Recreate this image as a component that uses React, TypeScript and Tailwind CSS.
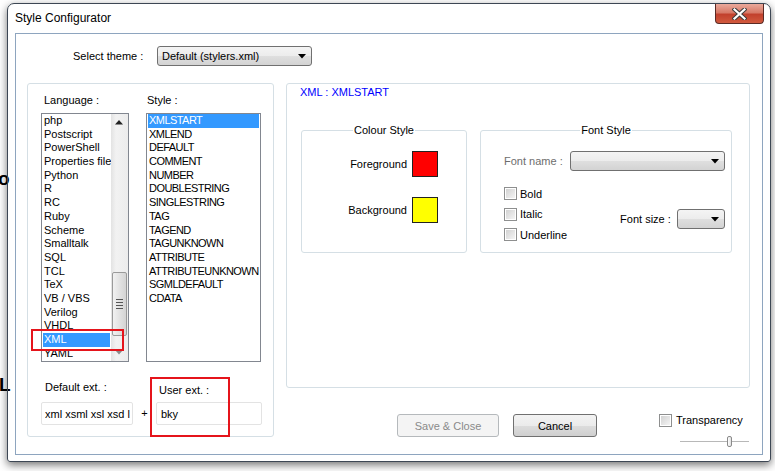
import React from 'react';

const languages = [
  'php', 'Postscript', 'PowerShell', 'Properties file', 'Python', 'R', 'RC', 'Ruby', 'Scheme',
  'Smalltalk', 'SQL', 'TCL', 'TeX', 'VB / VBS', 'Verilog', 'VHDL', 'XML', 'YAML'
];

const styles = [
  'XMLSTART', 'XMLEND', 'DEFAULT', 'COMMENT', 'NUMBER', 'DOUBLESTRING', 'SINGLESTRING', 'TAG',
  'TAGEND', 'TAGUNKNOWN', 'ATTRIBUTE', 'ATTRIBUTEUNKNOWN', 'SGMLDEFAULT', 'CDATA'
];

const Arrow = ({ color = '#000' }: { color?: string }) => (
  <svg width="8" height="5" viewBox="0 0 8 5">
    <path d="M0 0 H8 L4 4.5 Z" fill={color} />
  </svg>
);

const Combo = ({ className = '', text }: { className?: string; text?: string }) => (
  <div
    className={`flex items-center justify-between rounded-[3px] border border-[#707070] bg-[linear-gradient(#f4f4f4,#ececec_50%,#dfdfdf_50%,#d3d3d3)] pl-[4px] pr-[5px] ${className}`}
  >
    <span className="truncate text-[11px] leading-[14px] text-black">{text}</span>
    <Arrow />
  </div>
);

const CheckBox = () => (
  <div className="h-[13px] w-[13px] shrink-0 border border-[#8e8f8f] bg-white p-[1px]">
    <div className="h-full w-full bg-[linear-gradient(135deg,#d2d2d2,#f4f4f4)]" />
  </div>
);

const GroupTitle = ({ children }: { children: React.ReactNode }) => (
  <div className="absolute -top-[8px] left-0 right-0 flex justify-center">
    <span className="bg-white px-[1px] text-[11px] leading-[14px] text-black">{children}</span>
  </div>
);

export default function App() {
  return (
    <div className="relative h-[471px] w-[775px] overflow-hidden bg-white font-['Liberation_Sans',Arial,sans-serif]">
      {/* bits of the window behind */}
      <div className="absolute left-[-2px] top-[168px] text-[19px] font-bold leading-[22px] text-black">o</div>
      <div className="absolute left-[-1px] top-[374px] text-[19px] font-bold leading-[22px] text-black">L</div>

      {/* dialog window */}
      <div className="absolute left-[7px] top-[3px] flex h-[459px] w-[764px] flex-col rounded-t-[7px] rounded-b-[3px] border border-[#3d4754] bg-[linear-gradient(170deg,#cfe2f6,#b9d3ee_40%,#c3daf2_60%,#b3cdea)]/90 shadow-[0_3px_9px_rgba(0,0,0,0.55)]">
        {/* title bar */}
        <div className="relative flex h-[29px] shrink-0 items-center pl-[7px]">
          <span className="text-[12px] leading-[15px] text-black">Style Configurator</span>
          <div className="absolute right-[6px] top-0 flex h-[20px] w-[49px] items-center justify-center rounded-b-[4px] border border-t-0 border-[#5a2a25] bg-[linear-gradient(#eaa99b,#d77a68_45%,#c2412d_55%,#d15a3e)]">
            <svg width="15" height="12" viewBox="0 0 15 12">
              <path d="M2.5 1.5 L12.5 10.5 M12.5 1.5 L2.5 10.5" stroke="#3b3b3b" strokeWidth="4.2" strokeLinecap="square" />
              <path d="M2.5 1.5 L12.5 10.5 M12.5 1.5 L2.5 10.5" stroke="#ffffff" strokeWidth="2.2" strokeLinecap="square" />
            </svg>
          </div>
        </div>

        {/* client area */}
        <div className="mb-[6px] ml-[7px] mr-[7px] flex-1 border border-[#8ea5bf] bg-white text-[11px] leading-[14px] text-black">
          {/* theme row */}
          <div className="flex items-center pt-[12px]">
            <span className="ml-[57px] w-[84px]">Select theme :</span>
            <Combo className="h-[20px] w-[155px]" text="Default (stylers.xml)" />
          </div>

          <div className="mt-[17px] flex pl-[11px]">
            {/* left group */}
            <div className="relative h-[354px] w-[247px] rounded-[3px] border border-[#d5dfe5]">
              <div className="flex pl-[13px] pt-[9px]">
                <div className="w-[88px]">
                  <div className="pl-[3px]">Language :</div>
                  <div className="mt-[6px] flex h-[249px] overflow-hidden border border-[#828790]">
                    <div className="flex-1 overflow-hidden">
                      {languages.map((l) => (
                        <div
                          key={l}
                          className={`mx-[1px] h-[13.7px] whitespace-nowrap pl-[1px] leading-[13.7px] ${l === 'XML' ? 'bg-[#3399ff] text-white' : ''}`}
                        >
                          {l}
                        </div>
                      ))}
                    </div>
                    <div className="relative w-[17px] shrink-0 bg-[linear-gradient(90deg,#e3e3e3,#f2f2f2_30%,#ececec)]">
                      <div className="absolute left-[4px] top-[6px]">
                        <svg width="8" height="5" viewBox="0 0 8 5"><path d="M0 4.5 H8 L4 0 Z" fill="#222" /></svg>
                      </div>
                      <div className="absolute left-[1px] right-[1px] top-[158px] flex h-[64px] flex-col items-center justify-center gap-[2px] rounded-[2px] border border-[#9a9a9a] bg-[linear-gradient(90deg,#f1f1f1,#e2e2e2_50%,#d4d4d4)]">
                        <div className="h-[1px] w-[7px] bg-[#555]" />
                        <div className="h-[1px] w-[7px] bg-[#555]" />
                        <div className="h-[1px] w-[7px] bg-[#555]" />
                        <div className="h-[1px] w-[7px] bg-[#555]" />
                      </div>
                      <div className="absolute left-[4px] top-[236px]">
                        <Arrow color="#8a8a8a" />
                      </div>
                    </div>
                  </div>
                </div>
                <div className="ml-[17px] w-[115px]">
                  <div className="pl-[1px]">Style :</div>
                  <div className="mt-[6px] h-[249px] overflow-hidden border border-[#828790] tracking-[-0.55px]">
                    {styles.map((s) => (
                      <div
                        key={s}
                        className={`mx-[1px] h-[13.7px] whitespace-nowrap pl-[1px] leading-[13.7px] ${s === 'XMLSTART' ? 'bg-[#3399ff] text-white' : ''}`}
                      >
                        {s}
                      </div>
                    ))}
                  </div>
                </div>
              </div>

              {/* extensions */}
              <div className="flex pl-[13px]">
                <div className="w-[92px]">
                  <div className="mt-[18px] pl-[4px]">Default ext. :</div>
                  <div className="mt-[8px] h-[23px] overflow-hidden rounded-[2px] border border-[#e3e3e3] pl-[3px] pr-[2px]">
                    <div className="overflow-hidden whitespace-nowrap pt-[4px]">xml xsml xsl xsd l</div>
                  </div>
                </div>
                <div className="w-[23px] pt-[44px] text-center">+</div>
                <div className="w-[106px]">
                  <div className="mt-[21px] pl-[3px]">User ext. :</div>
                  <div className="mt-[5px] flex h-[23px] items-center rounded-[2px] border border-[#e3e3e3] pl-[4px]">
                    bky
                  </div>
                </div>
              </div>

              {/* annotations */}
              <div className="absolute left-[3px] top-[245px] h-[22px] w-[93px] border-2 border-[#e5141b]" />
              <div className="absolute left-[122px] top-[293px] h-[60px] w-[80px] border-2 border-[#e5141b]" />
            </div>

            {/* right column */}
            <div className="ml-[12px] w-[464px]">
              <div className="h-[305px] rounded-[3px] border border-[#d5dfe5]">
                <div className="pl-[13px] pt-[1px] text-[#0000ff]">XML : XMLSTART</div>
                <div className="mt-[31px] flex gap-[13px] pl-[14px]">
                  {/* colour style */}
                  <div className="relative h-[123px] w-[166px] rounded-[3px] border border-[#d5dfe5]">
                    <GroupTitle>Colour Style</GroupTitle>
                    <div className="flex flex-col items-end gap-[20px] pr-[28px] pt-[20px]">
                      <div className="flex items-center gap-[5px]">
                        <span>Foreground</span>
                        <div className="h-[26px] w-[26px] border border-[#222] bg-[#ff0000]" />
                      </div>
                      <div className="flex items-center gap-[5px]">
                        <span>Background</span>
                        <div className="h-[26px] w-[26px] border border-[#222] bg-[#ffff00]" />
                      </div>
                    </div>
                  </div>

                  {/* font style */}
                  <div className="relative h-[123px] w-[252px] rounded-[3px] border border-[#d5dfe5]">
                    <GroupTitle>Font Style</GroupTitle>
                    <div className="flex items-center pl-[23px] pt-[20px]">
                      <span className="w-[66px] text-[#6d6d6d]">Font name :</span>
                      <Combo className="h-[20px] w-[155px]" />
                    </div>
                    <div className="mt-[16px] flex pl-[23px]">
                      <div className="flex flex-col gap-[7.5px]">
                        <div className="flex h-[13px] items-center gap-[3px]"><CheckBox /><span>Bold</span></div>
                        <div className="flex h-[13px] items-center gap-[3px]"><CheckBox /><span>Italic</span></div>
                        <div className="flex h-[13px] items-center gap-[3px]"><CheckBox /><span>Underline</span></div>
                      </div>
                      <div className="ml-[53px] mt-[10px] flex items-center">
                        <span className="w-[57px]">Font size :</span>
                        <Combo className="h-[20px] w-[48px]" />
                      </div>
                    </div>
                  </div>
                </div>
              </div>

              {/* buttons row */}
              <div className="mt-[26px] flex items-start pl-[111px]">
                <div className="flex h-[23px] w-[102px] items-center justify-center rounded-[3px] border border-[#b5b9bc] bg-[#f4f4f4] text-[#8a8a8a]">
                  Save &amp; Close
                </div>
                <div className="ml-[14px] flex h-[23px] w-[84px] items-center justify-center rounded-[3px] border border-[#707070] bg-[linear-gradient(#f3f3f3,#ebebeb_50%,#dddddd_50%,#cfcfcf)]">
                  Cancel
                </div>
                <div className="ml-[62px] flex flex-col">
                  <div className="flex items-center gap-[4px]">
                    <CheckBox />
                    <span className="leading-[13px]">Transparency</span>
                  </div>
                  <div className="relative ml-[21px] mt-[14px] h-[2px] w-[69px] border-t border-[#b8b8b8] bg-white">
                    <div className="absolute -top-[6px] left-[47px] h-[11px] w-[5px] rounded-[2px] border border-[#8a8a8a] bg-[linear-gradient(90deg,#ffffff,#e1e1e1)]" />
                  </div>
                </div>
              </div>
            </div>
          </div>
        </div>
      </div>
    </div>
  );
}
